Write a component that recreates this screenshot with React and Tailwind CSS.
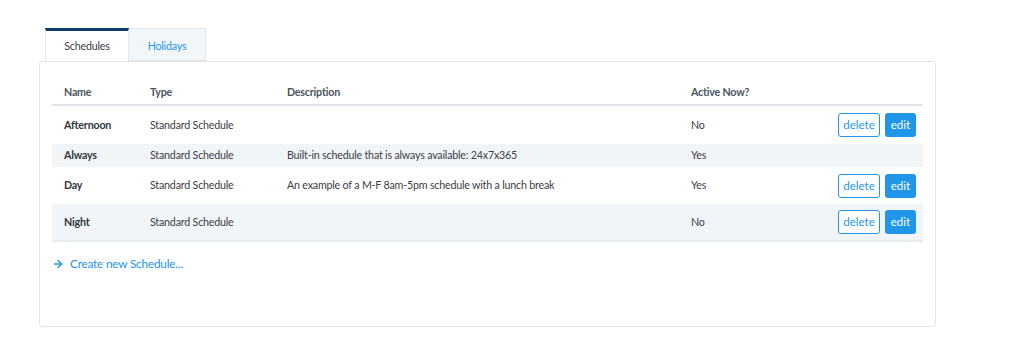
import { ArrowRight } from 'lucide-react';

const rows = [
  { name: 'Afternoon', type: 'Standard Schedule', desc: '', active: 'No', actions: true, h: 'h-[38px]' },
  { name: 'Always', type: 'Standard Schedule', desc: 'Built-in schedule that is always available: 24x7x365', active: 'Yes', actions: false, h: 'h-[23px]' },
  { name: 'Day', type: 'Standard Schedule', desc: 'An example of a M-F 8am-5pm schedule with a lunch break', active: 'Yes', actions: true, h: 'h-[37px]' },
  { name: 'Night', type: 'Standard Schedule', desc: '', active: 'No', actions: true, h: 'h-[36px]' },
];

export default function App() {
  return (
    <div className="w-[1024px] h-[344px] bg-white text-[10.7px] tracking-[-0.2px] text-[#3b4046]" style={{ fontFamily: 'Lato, "Liberation Sans", sans-serif' }}>
      <div className="pt-[28px] pl-[39px]">
        {/* Tabs */}
        <div className="flex pl-[6px]">
          <div className="w-[84px] h-[33px] border-t-[3px] border-[#0d3c6a] border-x border-x-[#e2e6ea] bg-white flex items-center justify-center text-[#3b4046] relative z-10 -mb-px">
            Schedules
          </div>
          <div className="w-[77px] h-[33px] pt-[3px] border border-[#e2e6ea] border-l-0 bg-[#f3f6f9] flex items-center justify-center text-[#2196e8]">
            Holidays
          </div>
        </div>

        {/* Panel */}
        <div className="w-[897px] h-[266px] border border-[#e2e5e8] rounded-[3px] px-[12px] pt-[19px]">
          <div className="flex h-[25px] items-center font-bold text-[#4a5561] border-b-2 border-[#dfe4ea]">
            <div className="w-[98px] pl-[12px]">Name</div>
            <div className="w-[137px]">Type</div>
            <div className="w-[404px]">Description</div>
            <div className="flex-1">Active Now?</div>
          </div>
          {rows.map((r, i) => (
            <div key={r.name} className={`flex items-center ${r.h} ${i % 2 === 1 ? 'bg-[#f2f5f8]' : ''}`}>
              <div className="w-[98px] pl-[12px] font-bold text-[#2f353b]">{r.name}</div>
              <div className="w-[137px]">{r.type}</div>
              <div className="w-[404px]">{r.desc}</div>
              <div className="flex-1">{r.active}</div>
              {r.actions && (
                <div className="flex gap-[5px] pr-[7px] tracking-normal">
                  <button className="w-[42px] h-[24px] border border-[#2196e8] rounded-[3px] text-[#2196e8] bg-white text-[11.5px]">delete</button>
                  <button className="w-[31px] h-[24px] rounded-[3px] bg-[#2196e8] text-white text-[11.5px]">edit</button>
                </div>
              )}
            </div>
          ))}
          <div className="border-t-2 border-[#e6eaee]" />
          <a className="flex items-center gap-[6px] mt-[13px] text-[#2196e8] text-[11.8px]">
            <ArrowRight size={12} strokeWidth={3} />
            Create new Schedule...
          </a>
        </div>
      </div>
    </div>
  );
}
